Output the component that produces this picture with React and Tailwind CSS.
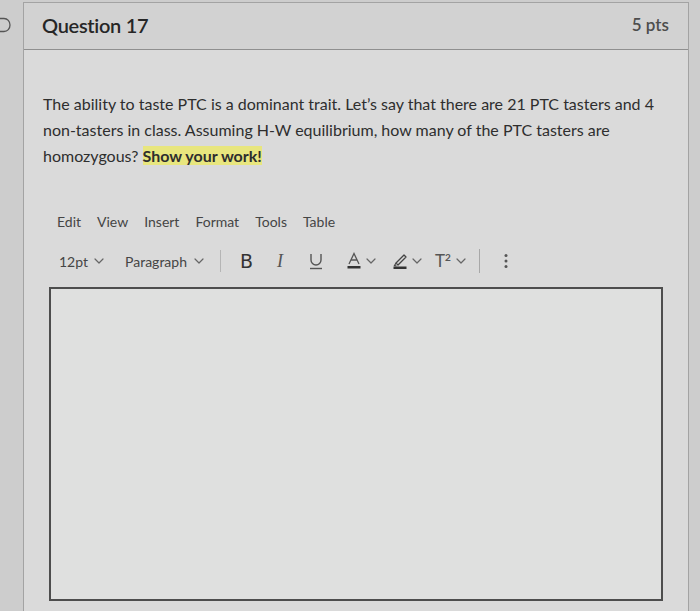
import React from "react";

const Chev = ({ className = "" }) => (
  <svg className={className} width="10" height="6" viewBox="0 0 10 6" fill="none">
    <path d="M1 1l4 4 4-4" stroke="#666" strokeWidth="1.2" strokeLinecap="round" strokeLinejoin="round" />
  </svg>
);

export default function App() {
  return (
    <div
      className="w-[700px] h-[611px] overflow-hidden flex bg-[#cdcdcd]"
      style={{ fontFamily: "Lato, 'Open Sans', sans-serif" }}
    >
      <div className="w-[23px] shrink-0 pt-[17px]">
        <svg width="12" height="16" viewBox="0 0 12 16" fill="none">
          <path d="M0 1.5h4c3.5 0 6 2.8 6 6.5s-2.5 6.5-6 6.5H0" stroke="#555" strokeWidth="1.3" />
        </svg>
      </div>
      <div className="flex-1 mr-[11px] mt-[2px] flex flex-col bg-[#dadada] border-l border-t border-r border-[#a3a3a3]">
        <div className="h-[47px] shrink-0 bg-[#d2d2d2] border-b border-[#8f8f8f] flex items-center justify-between pl-[18px] pr-[19px] pb-[3px]">
          <span className="text-[20px] font-semibold text-[#262626] tracking-[-0.3px]">Question 17</span>
          <span className="text-[17px] font-semibold text-[#4d4d4d]">5 pts</span>
        </div>
        <div className="pl-[19px] pt-[41px] flex flex-col">
          <p className="w-[630px] text-[16px] leading-[26px] text-[#2e2e2e]">
            The ability to taste PTC is a dominant trait. Let’s say that there are 21 PTC tasters and 4 non-tasters in class. Assuming H-W equilibrium, how many of the PTC tasters are homozygous?{" "}
            <span className="font-bold bg-[#e8e67e]">Show your work!</span>
          </p>
          <div className="mt-[42px] ml-[14px] flex items-center gap-[16px] text-[14px] text-[#454545] h-[20px]">
            <span>Edit</span>
            <span>View</span>
            <span>Insert</span>
            <span>Format</span>
            <span>Tools</span>
            <span>Table</span>
          </div>
          <div className="mt-[18px] ml-[16px] flex items-center h-[24px] text-[14px] text-[#454545]">
            <span>12pt</span>
            <Chev className="ml-[6px]" />
            <span className="ml-[21px]">Paragraph</span>
            <Chev className="ml-[7px]" />
            <div className="ml-[16px] w-px h-[22px] bg-[#b5b5b5]" />
            <span className="ml-[19px] text-[19px] text-[#333]" style={{ fontFamily: "'DejaVu Sans', sans-serif" }}>B</span>
            <span className="ml-[24px] text-[18px] italic text-[#555]" style={{ fontFamily: "'Liberation Serif', serif" }}>I</span>
            <svg className="ml-[26px]" width="14" height="18" viewBox="0 0 14 18" fill="none">
              <path d="M2 2v6a5 5 0 0 0 10 0V2" stroke="#555" strokeWidth="1.4" />
              <path d="M1 16.5h12" stroke="#555" strokeWidth="1.4" />
            </svg>
            <svg className="ml-[23px]" width="16" height="18" viewBox="0 0 16 18" fill="none">
              <path d="M3 12L8 1.5 13 12M5 8h6" stroke="#555" strokeWidth="1.3" />
              <rect x="1.5" y="14" width="13" height="2.5" fill="#333" />
            </svg>
            <Chev className="ml-[4px]" />
            <svg className="ml-[16px]" width="16" height="18" viewBox="0 0 16 18" fill="none">
              <path d="M4 11l2 2 8-8-2-2z" stroke="#444" strokeWidth="1.3" strokeLinejoin="round" />
              <path d="M4 11l-1.5 2.5 2 0.5" stroke="#444" strokeWidth="1.2" />
              <rect x="1.5" y="14.5" width="13" height="2.5" fill="#333" />
            </svg>
            <Chev className="ml-[4px]" />
            <span className="ml-[13px] text-[17px] text-[#555] relative">
              T<sup className="text-[10px] font-bold -top-[6px]">2</sup>
            </span>
            <Chev className="ml-[5px]" />
            <div className="ml-[13px] w-px h-[24px] bg-[#a8a8a8]" />
            <svg className="ml-[24px]" width="4" height="16" viewBox="0 0 4 16">
              <circle cx="2" cy="2.5" r="1.5" fill="#555" />
              <circle cx="2" cy="8" r="1.5" fill="#555" />
              <circle cx="2" cy="13.5" r="1.5" fill="#555" />
            </svg>
          </div>
          <div className="mt-[14px] ml-[6px] w-[614px] h-[314px] border-2 border-[#4d4d4d] bg-[#dfe0df]" />
        </div>
      </div>
    </div>
  );
}
